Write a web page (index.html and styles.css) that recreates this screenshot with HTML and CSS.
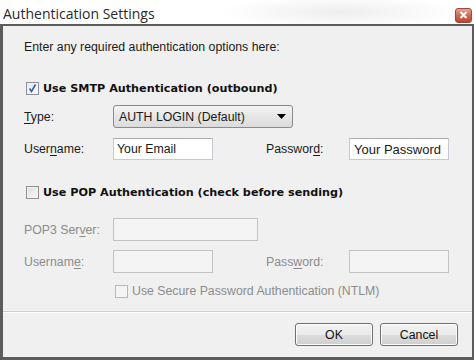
FILE: index.html
```html
<!DOCTYPE html>
<html>
<head>
<meta charset="utf-8">
<link rel="stylesheet" href="styles.css">
</head>
<body>
<div class="window">
  <div class="titlebar">
    <span class="title">Authentication Settings</span>
    <span class="close"><svg width="9" height="8" viewBox="0 0 9 8"><path d="M1.5 1 L7.5 7 M7.5 1 L1.5 7" stroke="#fff" stroke-width="2"/></svg></span>
  </div>
  <div class="frame">
    <div class="body">
      <p class="intro">Enter any required authentication options here:</p>

      <div class="check-row first">
        <span class="cb checked"><svg width="11" height="11" viewBox="0 0 11 11"><path d="M2.5 5.5 L4.5 8.5 L8.5 1.5" fill="none" stroke="#3b5fb0" stroke-width="1.6"/></svg></span>
        <span class="bold">Use SMTP Authentication (outbound)</span>
      </div>

      <div class="row r-type">
        <span class="lbl"><u>T</u>ype:</span>
        <span class="select"><span>AUTH LOGIN (Default)</span><svg width="9" height="5" viewBox="0 0 9 5"><path d="M0 0 H9 L4.5 5 Z" fill="#000"/></svg></span>
      </div>

      <div class="row r-user">
        <span class="lbl">User<u>n</u>ame:</span>
        <span class="input w100">Your Email</span>
        <span class="lbl2">Passwor<u>d</u>:</span>
        <span class="input w100 pw">Your Password</span>
      </div>

      <div class="check-row second">
        <span class="cb"></span>
        <span class="bold">Use POP Authentication (check before sending)</span>
      </div>

      <div class="row r-pop dis">
        <span class="lbl">POP3 Ser<u>v</u>er:</span>
        <span class="input dinput w144"></span>
      </div>

      <div class="row r-user2 dis">
        <span class="lbl">Usernam<u>e</u>:</span>
        <span class="input dinput w100"></span>
        <span class="lbl2">Pass<u>w</u>ord:</span>
        <span class="input dinput w100"></span>
      </div>

      <div class="check-row ntlm dis">
        <span class="cb dcb"></span>
        <span>Use Secure Password Authentication (NTLM)</span>
      </div>
    </div>
    <div class="sep"></div>
    <div class="buttons">
      <span class="btn">OK</span>
      <span class="btn">Cancel</span>
    </div>
  </div>
</div>
</body>
</html>
```

FILE: styles.css
```css
* { box-sizing: border-box; }
html, body { margin: 0; padding: 0; background: #fff; }
body {
  font-family: "Liberation Sans", Arial, sans-serif;
  font-size: 12.3px;
  color: #1a1a1a;
}
.window { width: 474px; height: 363px; background: #fff; }
.titlebar {
  height: 24px;
  display: flex;
  align-items: center;
  justify-content: space-between;
  padding: 0 2px 0 3px;
  background:
    radial-gradient(ellipse 120px 16px at 340px 12px, rgba(205,205,205,0.35), rgba(255,255,255,0) 100%),
    #fff;
}
.title {
  font-family: "Open Sans", sans-serif;
  font-size: 14px;
  color: #2a2a2a;
  margin-top: 2px;
}
.close {
  width: 17px;
  height: 15px;
  margin-top: 6px;
  border: 1px solid #9b4a3c;
  border-radius: 3px;
  background: linear-gradient(#e4a597, #cf6a52 50%, #c0442c);
  display: flex;
  align-items: center;
  justify-content: center;
}
.frame {
  height: 336px;
  border-left: 3px solid #5c5c5c;
  border-right: 2px solid #5c5c5c;
  border-top: 2px solid #5c5c5c;
  border-bottom: 3px solid #5c5c5c;
  background: #f0f0f0;
  display: flex;
  flex-direction: column;
}
.body { padding-left: 21px; }
.intro { margin: 13px 0 0 0; line-height: 16px; }
.row { display: flex; align-items: center; }
.lbl { width: 89px; }
.lbl2 { width: 83px; margin-left: 53px; }
.bold {
  font-family: "DejaVu Sans", Verdana, sans-serif;
  font-weight: bold;
  font-size: 11.2px;
  color: #111;
}
.check-row { display: flex; align-items: center; height: 16px; }
.check-row.first { margin-top: 25px; }
.check-row.second { margin-top: 24px; }
.cb {
  width: 13px; height: 13px;
  margin-left: 2px;
  margin-right: 4px;
  border: 1px solid #8f8f8f;
  background: linear-gradient(135deg, #dcdcdc, #f8f8f8);
  box-shadow: inset 0 0 0 1px #f4f4f4;
  display: flex; align-items: center; justify-content: center;
}
.cb.checked { background: linear-gradient(135deg, #e4e9f2, #fbfcfe); border-color: #8a8f9a; }
.r-type { margin-top: 9px; height: 23px; }
.select {
  width: 180px; height: 23px;
  border: 1px solid #8a8a8a;
  border-radius: 3px;
  background: linear-gradient(#f4f4f4, #e6e6e6 50%, #dcdcdc);
  display: flex; align-items: center; justify-content: space-between;
  padding: 0 6px 0 5px;
}
.r-user { margin-top: 10px; height: 22px; }
.input {
  height: 22px;
  border: 1px solid #c6c9cf;
  border-top-color: #abadb3;
  background: #fff;
  display: flex; align-items: center;
  padding-left: 3px;
}
.w100 { width: 100px; }
.w144 { width: 145px; }
.pw { font-size: 13px; padding-left: 4px; }
.r-pop { margin-top: 18px; height: 23px; }
.r-pop .input { height: 23px; }
.r-user2 { margin-top: 9px; height: 23px; }
.r-user2 .input { height: 23px; }
.dis { color: #8c8c8c; }
.dinput { background: #f4f4f4; border: 1px solid #c3c3c3; }
.ntlm { margin-top: 10px; padding-left: 89px; }
.dcb { background: #f4f4f4; border-color: #b8b8b8; box-shadow: none; }
.sep {
  margin-top: 12px;
  height: 2px;
  border-top: 1px solid #cfcfcf;
  border-bottom: 1px solid #fbfbfb;
}
.buttons {
  margin-top: 10px;
  display: flex;
  justify-content: flex-end;
  gap: 7px;
  padding-right: 14px;
}
.btn {
  width: 78px; height: 23px;
  border: 1px solid #707070;
  border-radius: 3px;
  background: linear-gradient(#f2f2f2, #ebebeb 50%, #dddddd 51%, #cfcfcf);
  box-shadow: inset 0 0 0 1px #fcfcfc;
  display: flex; align-items: center; justify-content: center;
  color: #111;
}
u { text-decoration: underline; text-underline-offset: 2px; }
```
